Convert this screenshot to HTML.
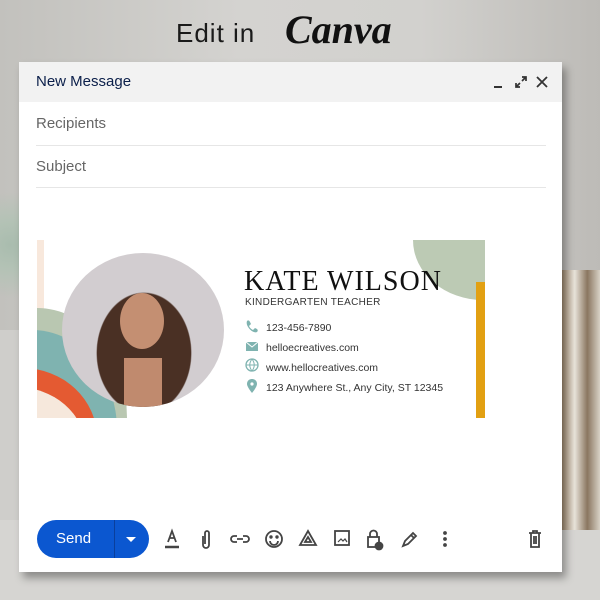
<!DOCTYPE html>
<html><head><style>
body{margin:0;width:600px;height:600px;overflow:hidden;font-family:"Liberation Sans",sans-serif;background:linear-gradient(90deg,#c2c1bd 0%,#d4d3d0 40%,#d2d1ce 70%,#bdbbb7 100%);position:relative}
.abs{position:absolute}
</style></head><body>
<div class="abs" style="left:0;top:520px;width:600px;height:80px;background:#d6d5d2"></div>
<div class="abs" style="left:562px;top:270px;width:38px;height:260px;background:linear-gradient(90deg,#a58f73,#e8e3da,#8a7660,#d8d2c6)"></div>
<div class="abs" style="left:0;top:170px;width:19px;height:150px;background:radial-gradient(circle at 10px 75px,#a9bcae 0,#b3c2b5 30%,transparent 70%)"></div>
<div class="abs" style="left:0;top:330px;width:19px;height:190px;background:#cfcecb"></div>
<div class="abs" style="left:176px;top:18px;font-size:26px;color:#1a1a1a;letter-spacing:1px">Edit in</div>
<div class="abs" style="left:285px;top:6px;font-size:40px;font-family:'Liberation Serif',serif;font-style:italic;font-weight:bold;color:#111">Canva</div>
<div class="abs" style="left:19px;top:62px;width:543px;height:510px;background:#fff;box-shadow:4px 6px 8px rgba(0,0,0,.35)">
 <div style="height:40px;background:#f2f2f2;position:relative">
  <div class="abs" style="left:17px;top:11px;font-size:15px;color:#0b1f4a">New Message</div>
  <div class="abs" style="left:475px;top:24px;width:8px;height:2px;background:#333"></div>
  <svg class="abs" style="left:495px;top:13px" width="14" height="14" viewBox="0 0 14 14" fill="none" stroke="#333" stroke-width="1.7"><path d="M2 12L6 8M2 8v4h4M12 2L8 6M8 2h4v4"/></svg>
  <svg class="abs" style="left:517px;top:14px" width="12" height="12" viewBox="0 0 12 12" stroke="#333" stroke-width="1.8"><path d="M1 1L11 11M11 1L1 11"/></svg>
 </div>
 <div class="abs" style="left:17px;top:53px;font-size:15px;color:#666">Recipients</div>
 <div class="abs" style="left:17px;top:83px;width:510px;height:1px;background:#e6e6e6"></div>
 <div class="abs" style="left:17px;top:96px;font-size:15px;color:#666">Subject</div>
 <div class="abs" style="left:17px;top:125px;width:510px;height:1px;background:#e6e6e6"></div>
</div>
<div class="abs" style="left:37px;top:240px;width:448px;height:178px;overflow:hidden;background:#fff">
 <div class="abs" style="left:0;top:0;width:7px;height:80px;background:#f8e8dc"></div>
 <div class="abs" style="left:-90px;top:68px;width:180px;height:220px;border-radius:50%;background:#b9c7b1"></div>
 <div class="abs" style="left:-90px;top:90px;width:170px;height:200px;border-radius:50%;background:#7fb3b0"></div>
 <div class="abs" style="left:-90px;top:128px;width:150px;height:140px;border-radius:50%;background:#e45a32"></div>
 <div class="abs" style="left:-90px;top:147px;width:138px;height:120px;border-radius:50%;background:#f6e8dc"></div>
 <div class="abs" style="left:25px;top:13px;width:162px;height:154px;border-radius:50%;background:radial-gradient(ellipse 55px 70px at 82px 100px,#4a3024 0,#4a3024 85%,transparent 87%),#d2cdd0;overflow:hidden">
  <div class="abs" style="left:58px;top:40px;width:44px;height:56px;border-radius:50%;background:#c48f72"></div>
  <div class="abs" style="left:62px;top:105px;width:38px;height:50px;background:#c08a6e"></div>
 </div>
 <div class="abs" style="left:376px;top:-60px;width:140px;height:120px;border-radius:50%;background:#bccab4"></div>
 <div class="abs" style="left:439px;top:42px;width:9px;height:136px;background:#e2a012"></div>
 <div class="abs" style="left:207px;top:26px;font-family:'Liberation Serif',serif;font-size:28px;color:#111;letter-spacing:1px;white-space:nowrap">KATE WILSON</div>
 <div class="abs" style="left:208px;top:57px;font-size:10px;color:#333;letter-spacing:.3px">KINDERGARTEN TEACHER</div>
 <div class="abs" style="left:229px;top:78px;font-size:10.5px;color:#333;line-height:20px">123-456-7890<br>helloecreatives.com<br>www.hellocreatives.com<br>123 Anywhere St., Any City, ST 12345</div>
 <svg class="abs" style="left:207px;top:79px" width="16" height="82" viewBox="0 0 16 82" fill="#7fb3b0">
  <path d="M3 2c1-1 2-1 3 1l1 2-2 2c1 2 2 3 4 4l2-2 2 1c1 1 1 2 0 3-4 2-12-6-10-11z"/>
  <rect x="2" y="23" width="12" height="9"/><path d="M2 23l6 5 6-5" stroke="#fff" fill="none"/>
  <circle cx="8" cy="46" r="6" fill="none" stroke="#7fb3b0" stroke-width="1.3"/><path d="M2 46h12M8 40c-3 4-3 8 0 12M8 40c3 4 3 8 0 12" stroke="#7fb3b0" fill="none"/>
  <path d="M8 60c-3 0-5 2-5 5 0 3 5 9 5 9s5-6 5-9c0-3-2-5-5-5z"/><circle cx="8" cy="65" r="1.6" fill="#fff"/>
 </svg>
</div>
<div class="abs" style="left:37px;top:520px;width:112px;height:38px;border-radius:19px;background:#0b57d0"></div>
<div class="abs" style="left:56px;top:520px;line-height:38px;color:#fff;font-size:15px">Send</div>
<div class="abs" style="left:114px;top:520px;width:1px;height:38px;background:#0a3f9c"></div>
<div class="abs" style="left:126px;top:537px;border-left:5px solid transparent;border-right:5px solid transparent;border-top:5px solid #fff"></div>
<svg class="abs" style="left:160px;top:527px" width="390" height="24" viewBox="0 0 390 24" fill="none" stroke="#444" stroke-width="1.8">
 <path d="M8 15L12 4l4 11M9.5 11h5"/><path d="M5 20h14" stroke-width="2.5"/>
 <path d="M43 9v9a3 3 0 006 0V6a2 2 0 00-4 0v11"/>
 <path d="M77 9h-3a3 3 0 000 6h3M83 9h3a3 3 0 010 6h-3M77 12h6"/>
 <circle cx="114" cy="12" r="8"/><circle cx="111" cy="10" r=".8" fill="#444"/><circle cx="117" cy="10" r=".8" fill="#444"/><path d="M110 14a4 4 0 008 0"/>
 <path d="M148 4l8 14h-16z"/><path d="M148 10l3 5h-6z"/>
 <rect x="175" y="4" width="14" height="14"/><path d="M178 15l3-3 2 2 2-2 2 3" stroke-width="1.2"/>
 <rect x="208" y="10" width="11" height="10"/><path d="M210 10V7a3.5 3.5 0 017 0v3"/><circle cx="219" cy="19" r="3.5" fill="#444"/>
 <path d="M243 19l2-5 8-8 3 3-8 8zM251 8l3 3"/>
 <circle cx="285" cy="6" r="1" fill="#444"/><circle cx="285" cy="12" r="1" fill="#444"/><circle cx="285" cy="18" r="1" fill="#444"/>
 <path d="M369 6h12M373 6V4h4v2M371 6v14h8V6M374 9v8M376 9v8"/>
</svg>
</body></html>
